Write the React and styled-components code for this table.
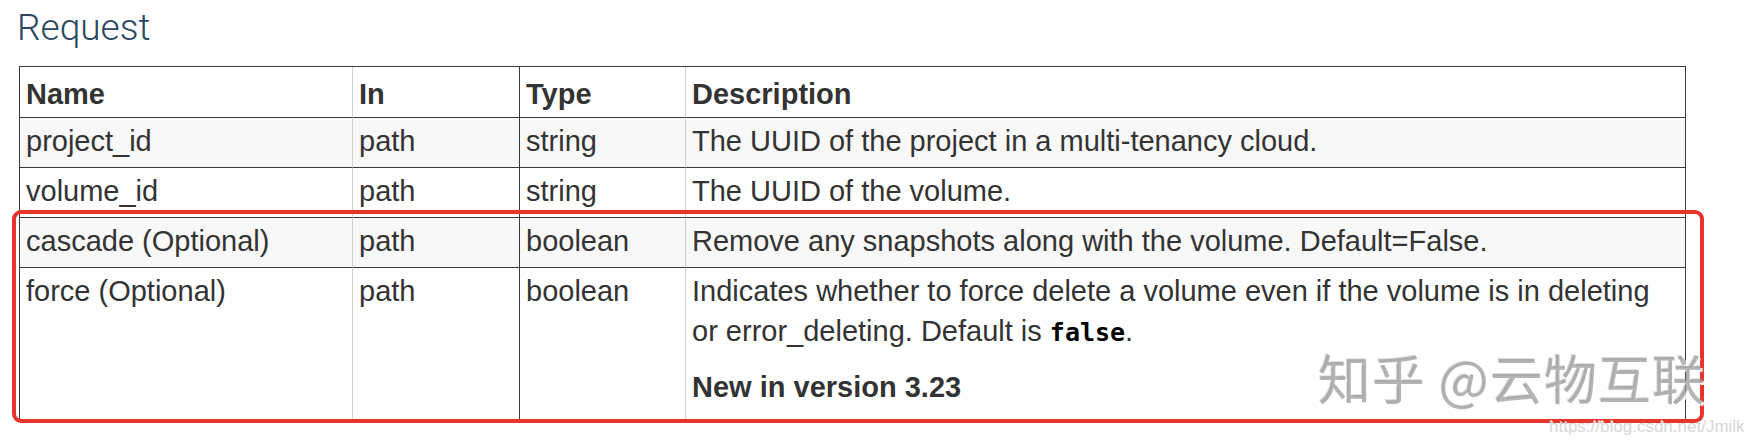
import React from "react";
import styled, { createGlobalStyle } from "styled-components";

const GlobalStyle = createGlobalStyle`
  body {
    margin: 0;
    background: #fff;
    font-family: "Liberation Sans", Arial, sans-serif;
    color: #333;
  }
`;

const dark = "#3a3a3a";
const light = "#cfcfcf";

const Page = styled.div`
  position: relative;
  width: 1750px;
  height: 446px;
  padding-left: 19px;
  box-sizing: border-box;
  overflow: hidden;
`;

const Heading = styled.h2`
  margin: 0;
  padding-top: 6px;
  margin-left: -2px;
  font-family: Roboto, "Liberation Sans", sans-serif;
  font-weight: 300;
  font-size: 37px;
  line-height: 44px;
  color: #2b4762;
`;

const Table = styled.table`
  margin-top: 16px;
  width: 1667px;
  table-layout: fixed;
  border-spacing: 0;
  border-top: 1px solid ${dark};
  border-left: 1px solid ${dark};
  font-size: 29px;
  line-height: 38px;
`;

const Col = styled.col`
  width: ${(p) => p.$w}px;
`;

const Row = styled.tr`
  background: ${(p) => (p.$striped ? "#f8f8f8" : "#fff")};
`;

const Th = styled.th`
  text-align: left;
  font-weight: bold;
  padding: 8px 6px 4px;
  border-bottom: 1px solid ${dark};
  border-right: 1px solid ${(p) => (p.$soft ? light : dark)};
`;

const Td = styled.td`
  vertical-align: top;
  padding: 4px 8px 7px 6px;
  border-bottom: 1px solid ${dark};
  border-right: 1px solid ${(p) => (p.$soft ? light : dark)};
`;

const Para = styled.p`
  margin: ${(p) => (p.$last ? "0 0 5px" : "-1px 0 14px")};
  line-height: 40px;
  font-weight: ${(p) => (p.$bold ? "bold" : "normal")};
`;

const Code = styled.code`
  font-family: "DejaVu Sans Mono", "Liberation Mono", monospace;
  font-weight: bold;
  font-size: 25px;
  color: #000;
`;

const Highlight = styled.div`
  position: absolute;
  left: 12px;
  top: 210px;
  width: 1692px;
  height: 213px;
  box-sizing: border-box;
  border: 4px solid #e8352b;
  border-radius: 9px;
  pointer-events: none;
`;

const Watermark = styled.div`
  position: absolute;
  left: 1318px;
  top: 347px;
  font-family: "Noto Sans CJK SC", sans-serif;
  font-size: 53px;
  line-height: 60px;
  letter-spacing: 1px;
  color: rgba(150, 150, 150, 0.7);
  text-shadow: 2px 2px 0 rgba(255, 255, 255, 0.9), -1px -1px 0 rgba(120, 120, 120, 0.25);
  white-space: nowrap;
  pointer-events: none;
`;

const SourceMark = styled.div`
  position: absolute;
  left: 1549px;
  top: 417px;
  font-family: "Liberation Sans", Arial, sans-serif;
  font-size: 17px;
  line-height: 20px;
  color: #d8d8d8;
  text-shadow: 1px 1px 0 #fff;
  white-space: nowrap;
`;

const columns = [
  { label: "Name", w: 333, soft: true },
  { label: "In", w: 167, soft: false },
  { label: "Type", w: 166, soft: true },
  { label: "Description", w: 1000, soft: false },
];

const rows = [
  {
    name: "project_id",
    type: "string",
    desc: "The UUID of the project in a multi-tenancy cloud.",
  },
  { name: "volume_id", type: "string", desc: "The UUID of the volume." },
  {
    name: "cascade (Optional)",
    type: "boolean",
    desc: "Remove any snapshots along with the volume. Default=False.",
  },
  {
    name: "force (Optional)",
    type: "boolean",
    desc: (
      <>
        <Para>
          Indicates whether to force delete a volume even if the volume is in
          deleting or error_deleting. Default is <Code>false</Code>.
        </Para>
        <Para $bold $last>
          New in version 3.23
        </Para>
      </>
    ),
  },
];

export default function App() {
  return (
    <>
      <GlobalStyle />
      <Page>
        <Heading>Request</Heading>
        <Table>
          <colgroup>
            {columns.map((c) => (
              <Col key={c.label} $w={c.w} />
            ))}
          </colgroup>
          <thead>
            <Row>
              {columns.map((c) => (
                <Th key={c.label} $soft={c.soft}>
                  {c.label}
                </Th>
              ))}
            </Row>
          </thead>
          <tbody>
            {rows.map((r, i) => (
              <Row key={r.name} $striped={i % 2 === 0}>
                <Td $soft>{r.name}</Td>
                <Td>path</Td>
                <Td $soft>{r.type}</Td>
                <Td>{r.desc}</Td>
              </Row>
            ))}
          </tbody>
        </Table>
        <Highlight />
        <Watermark>知乎 @云物互联</Watermark>
        <SourceMark>https://blog.csdn.net/Jmilk</SourceMark>
      </Page>
    </>
  );
}
